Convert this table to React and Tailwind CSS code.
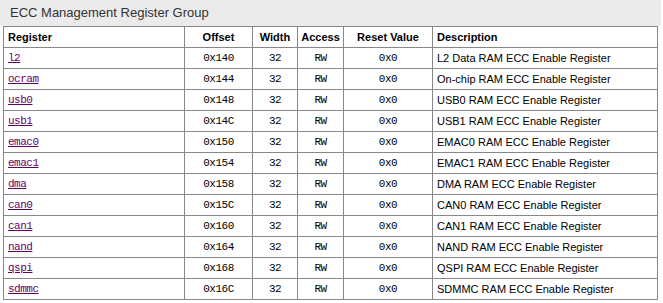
import React from 'react';

const rows = [
  ['l2', '0x140', 'L2 Data RAM ECC Enable Register'],
  ['ocram', '0x144', 'On-chip RAM ECC Enable Register'],
  ['usb0', '0x148', 'USB0 RAM ECC Enable Register'],
  ['usb1', '0x14C', 'USB1 RAM ECC Enable Register'],
  ['emac0', '0x150', 'EMAC0 RAM ECC Enable Register'],
  ['emac1', '0x154', 'EMAC1 RAM ECC Enable Register'],
  ['dma', '0x158', 'DMA RAM ECC Enable Register'],
  ['can0', '0x15C', 'CAN0 RAM ECC Enable Register'],
  ['can1', '0x160', 'CAN1 RAM ECC Enable Register'],
  ['nand', '0x164', 'NAND RAM ECC Enable Register'],
  ['qspi', '0x168', 'QSPI RAM ECC Enable Register'],
  ['sdmmc', '0x16C', 'SDMMC RAM ECC Enable Register'],
];

const mono = "font-['Liberation_Mono',monospace] text-[11px] tracking-[-0.5px]";

export default function App() {
  return (
    <div className="w-[663px] h-[303px] bg-white font-['Liberation_Sans',Arial,sans-serif] overflow-hidden">
      {/* title band */}
      <div className="w-[661px] h-[26px] bg-[#ebebeb] pl-[10px] flex items-center text-[13px] text-[#333]">
        ECC Management Register Group
      </div>

      <table className="ml-[3px] w-[654px] border-collapse table-fixed text-[11px] text-black">
        <colgroup>
          <col className="w-[181px]" />
          <col className="w-[68px]" />
          <col className="w-[45px]" />
          <col className="w-[46px]" />
          <col className="w-[89px]" />
          <col className="w-[225px]" />
        </colgroup>
        <thead>
          <tr className="h-[21px] font-bold">
            <td className="border border-[#888] px-[4px] text-left">Register</td>
            <td className="border border-[#888] text-center">Offset</td>
            <td className="border border-[#888] text-center">Width</td>
            <td className="border border-[#888] text-center">Access</td>
            <td className="border border-[#888] text-center">Reset Value</td>
            <td className="border border-[#888] px-[4px] text-left">Description</td>
          </tr>
        </thead>
        <tbody>
          {rows.map(([name, offset, desc]) => (
            <tr key={name} className="h-[21px]">
              <td className="border border-[#888] px-[4px] text-left">
                <a href="#" className={`${mono} text-[#660066] underline`}>{name}</a>
              </td>
              <td className={`border border-[#888] text-center ${mono}`}>{offset}</td>
              <td className={`border border-[#888] text-center ${mono}`}>32</td>
              <td className={`border border-[#888] text-center ${mono}`}>RW</td>
              <td className={`border border-[#888] text-center ${mono}`}>0x0</td>
              <td className="border border-[#888] px-[4px] text-left">{desc}</td>
            </tr>
          ))}
        </tbody>
      </table>
    </div>
  );
}
